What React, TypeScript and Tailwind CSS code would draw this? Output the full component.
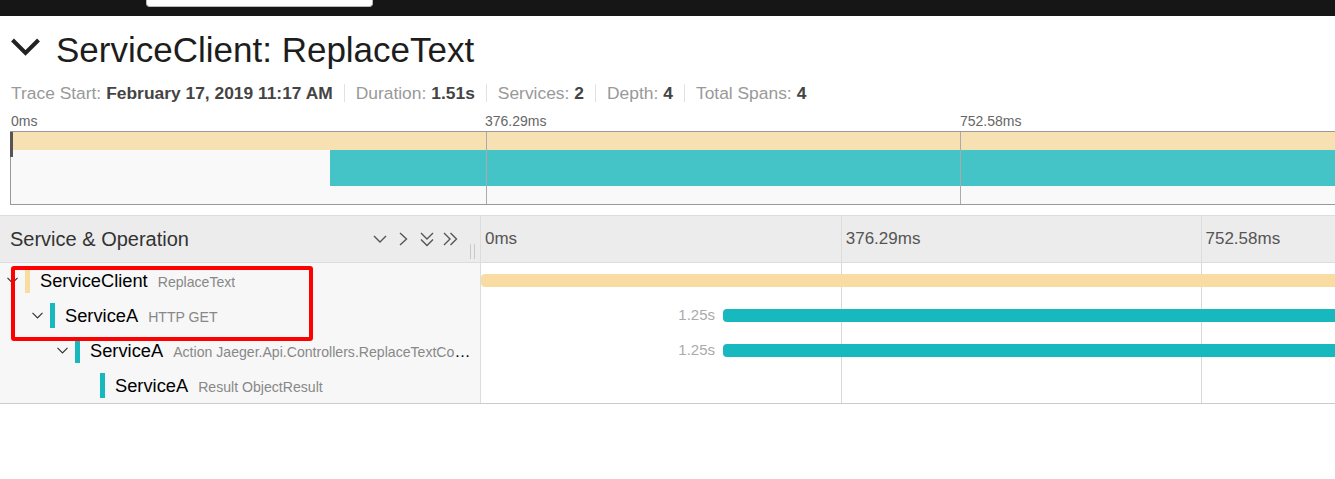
import React from 'react'

const TAN = '#f8dca1'
const TEAL = '#17b8be'

type Span = {
  service: string
  operation: string
  depth: number
  color: string
  hasChildren: boolean
  offset: 'start' | 'mid'
  label?: string
}

const spans: Span[] = [
  { service: 'ServiceClient', operation: 'ReplaceText', depth: 0, color: TAN, hasChildren: true, offset: 'start' },
  { service: 'ServiceA', operation: 'HTTP GET', depth: 1, color: TEAL, hasChildren: true, offset: 'mid', label: '1.25s' },
  {
    service: 'ServiceA',
    operation: 'Action Jaeger.Api.Controllers.ReplaceTextController.Get (Jaeger.Api)',
    depth: 2,
    color: TEAL,
    hasChildren: true,
    offset: 'mid',
    label: '1.25s',
  },
  { service: 'ServiceA', operation: 'Result ObjectResult', depth: 3, color: TEAL, hasChildren: false, offset: 'mid' },
]

const indent = ['pl-0', 'pl-[25px]', 'pl-[50px]', 'pl-[75px]']

function RowChevron() {
  return (
    <svg width="11" height="7" viewBox="0 0 11 7" className="shrink-0">
      <polyline points="0.5,0.8 5.5,5.8 10.5,0.8" fill="none" stroke="#333" strokeWidth="1.2" />
    </svg>
  )
}

function TickLines({ color }: { color: string }) {
  return (
    <div className="pointer-events-none absolute inset-0 grid grid-cols-4">
      <div />
      <div className={color} />
      <div className={color} />
      <div className={color} />
    </div>
  )
}

export default function App() {
  return (
    <div className="w-full overflow-hidden bg-white" style={{ fontFamily: '"Liberation Sans", Arial, sans-serif' }}>
      <div className="w-[1920px]">
        {/* top nav */}
        <div className="h-4 bg-[#161616] pl-[146px]">
          <div className="h-[7px] w-[227px] rounded-b-[4px] border border-t-0 border-[#bbb] bg-white" />
        </div>

        {/* title */}
        <div className="mt-[13px] flex h-[41px] items-center pl-[10px]">
          <svg width="31" height="20" viewBox="0 0 31 20" className="mb-[5px] shrink-0">
            <polyline points="2.5,3 15.5,16 28.5,3" fill="none" stroke="#222" strokeWidth="4" />
          </svg>
          <h1 className="ml-[15px] text-[35px] leading-[41px] text-[#1d1d1d]">ServiceClient: ReplaceText</h1>
        </div>

        {/* meta */}
        <div className="mt-[13px] flex h-[20px] items-center pl-[11px] text-[17.4px] leading-[20px]">
          <span className="text-[#999]">Trace Start:</span>
          <b className="ml-[5px] text-[#444]">February 17, 2019 11:17 AM</b>
          <span className="mx-[11px] h-[18px] w-px bg-[#e2e2e2]" />
          <span className="text-[#999]">Duration:</span>
          <b className="ml-[5px] text-[#444]">1.51s</b>
          <span className="mx-[11px] h-[18px] w-px bg-[#e2e2e2]" />
          <span className="text-[#999]">Services:</span>
          <b className="ml-[5px] text-[#444]">2</b>
          <span className="mx-[11px] h-[18px] w-px bg-[#e2e2e2]" />
          <span className="text-[#999]">Depth:</span>
          <b className="ml-[5px] text-[#444]">4</b>
          <span className="mx-[11px] h-[18px] w-px bg-[#e2e2e2]" />
          <span className="text-[#999]">Total Spans:</span>
          <b className="ml-[5px] text-[#444]">4</b>
        </div>

        {/* minimap */}
        <div className="mx-[10px] mt-[10px]">
          <div className="grid h-[18px] grid-cols-4 text-[14px] leading-[16px] text-[#666]">
            <span className="pl-px">0ms</span>
            <span>376.29ms</span>
            <span>752.58ms</span>
            <span>1.13s</span>
          </div>
          <div className="relative h-[74px] border border-[#999] bg-[#f9f9f9]">
            <div className="h-[18px] bg-[#f7e0b2]" />
            <div className="h-[18px] pl-[16.8%]">
              <div className="h-full bg-[#45c4c8]" />
            </div>
            <div className="h-[18px] pl-[16.8%]">
              <div className="h-full bg-[#45c4c8]" />
            </div>
            <div className="h-[18px]" />
            <TickLines color="border-l border-[#aaa]" />
            <div className="absolute left-[-1px] top-0 h-[25px] w-[3px] bg-[#555]" />
          </div>
        </div>

        {/* table header */}
        <div className="mt-[10px] flex h-[48px] border-y border-[#ddd] bg-[#ececec]">
          <div className="flex w-[480px] shrink-0 items-center pl-[10px]">
            <span className="text-[20px] text-[#333]">Service &amp; Operation</span>
            <div className="ml-auto flex items-center">
              <svg width="14" height="8" viewBox="0 0 14 8">
                <polyline points="1,1 7,7 13,1" fill="none" stroke="#555" strokeWidth="1.4" />
              </svg>
              <svg width="9" height="14" viewBox="0 0 9 14" className="ml-[12px]">
                <polyline points="1,1 7.5,7 1,13" fill="none" stroke="#555" strokeWidth="1.4" />
              </svg>
              <svg width="14" height="15" viewBox="0 0 14 15" className="ml-[12px]">
                <polyline points="1,1 7,7 13,1" fill="none" stroke="#555" strokeWidth="1.4" />
                <polyline points="1,7.5 7,13.5 13,7.5" fill="none" stroke="#555" strokeWidth="1.4" />
              </svg>
              <svg width="15" height="14" viewBox="0 0 15 14" className="ml-[9px]">
                <polyline points="1,1 7,7 1,13" fill="none" stroke="#555" strokeWidth="1.4" />
                <polyline points="7.5,1 13.5,7 7.5,13" fill="none" stroke="#555" strokeWidth="1.4" />
              </svg>
            </div>
            <div className="mb-[3px] ml-[12px] mr-[5px] flex h-[15px] gap-[3px] self-end">
              <span className="w-px bg-[#c8c8c8]" />
              <span className="w-px bg-[#c8c8c8]" />
            </div>
          </div>
          <div className="grid w-[1440px] grid-cols-4 border-l border-[#ddd] text-[17px] text-[#555]">
            <div className="flex items-center pl-[4px]">0ms</div>
            <div className="flex items-center border-l border-[#ddd] pl-[4px]">376.29ms</div>
            <div className="flex items-center border-l border-[#ddd] pl-[4px]">752.58ms</div>
            <div className="flex items-center border-l border-[#ddd] pl-[4px]">1.13s</div>
          </div>
        </div>

        {/* rows */}
        <div className="relative flex border-b border-[#ccc]">
          <div className="w-[480px] shrink-0 bg-[#f7f7f7]">
            {spans.map((s, i) => (
              <div key={i} className={`flex h-[35px] items-center pr-[8px] ${indent[s.depth]}`}>
                <div className="flex w-[25px] shrink-0 justify-center pr-[1px]">{s.hasChildren && <RowChevron />}</div>
                <div className="h-[25px] w-[5px] shrink-0" style={{ backgroundColor: s.color }} />
                <div className="ml-[10px] min-w-0 truncate text-[#000]">
                  <span className="text-[18.3px]">{s.service}</span>
                  <span className="ml-[10px] text-[14.1px] text-[#888]">{s.operation}</span>
                </div>
              </div>
            ))}
          </div>
          <div className="relative w-[1440px] border-l border-[#ddd] bg-white">
            <TickLines color="border-l border-[#d8d8d8]" />
            {spans.map((s, i) => (
              <div key={i} className="relative flex h-[35px] items-center">
                {s.offset === 'start' ? (
                  <div className="h-[13px] flex-1 rounded-l-[4px]" style={{ backgroundColor: s.color }} />
                ) : (
                  <>
                    <div className="flex w-[242px] shrink-0 justify-end pr-[8px] text-[15px] text-[#aaa]">{s.label}</div>
                    {s.label && <div className="h-[13px] flex-1 rounded-l-[4px]" style={{ backgroundColor: s.color }} />}
                  </>
                )}
              </div>
            ))}
          </div>

          {/* highlight box */}
          <div className="pointer-events-none absolute left-[11px] top-[3px] h-[75px] w-[302px] rounded-[3px] border-[4px] border-[#ff0000]" />
        </div>
      </div>
    </div>
  )
}
